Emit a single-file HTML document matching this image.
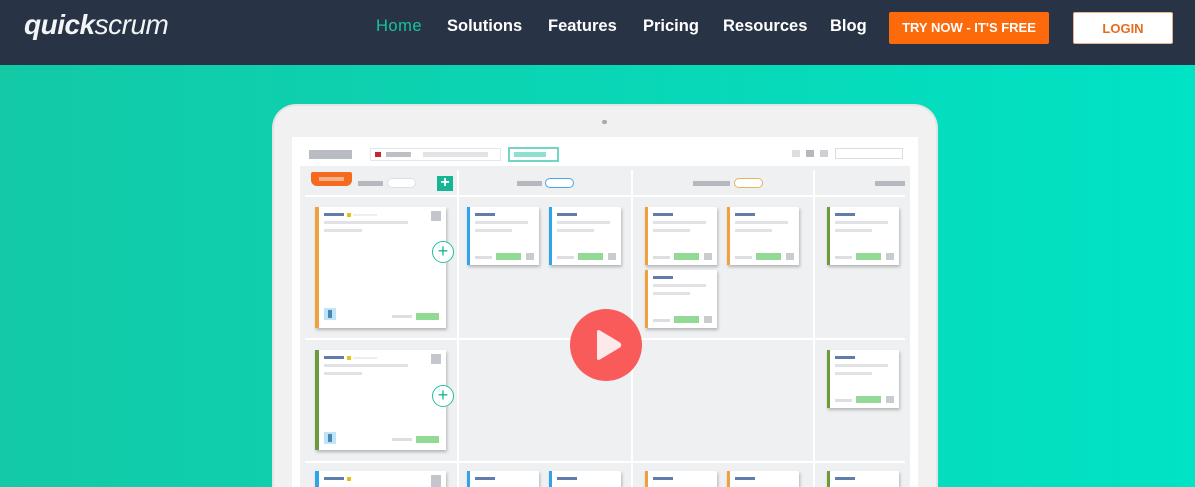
<!DOCTYPE html><html><head><style>
*{margin:0;padding:0;box-sizing:border-box}
html{width:1195px;height:487px;overflow:hidden}
body{width:1195px;height:487px;overflow:hidden;position:relative;font-family:"Liberation Sans",sans-serif;background:linear-gradient(90deg,#13c9a6,#00e3c4)}
.nav{position:absolute;left:0;top:0;width:1195px;height:65px;background:#283445}
.logo{position:absolute;left:24px;top:9px;color:#f2f4f6;font-size:28px;font-style:italic;letter-spacing:-0.5px}
.logo b{font-weight:bold}
.m{position:absolute;top:17px;color:#fff;font-weight:bold;font-size:16.5px}
.btn{position:absolute;top:12px;height:32px;font-size:13px;font-weight:bold;text-align:center;line-height:32px;border-radius:2px}
.lap{position:absolute;left:272px;top:104px;width:666px;height:383px;background:#f1f1f1;border-radius:24px 24px 0 0;border:2px solid #e2e4e6;border-bottom:none}
.scr{position:absolute;left:292px;top:137px;width:626px;height:350px;background:#fff}
.board{position:absolute;left:300px;top:166px;width:610px;height:321px;background:#eff0f2}
.r{position:absolute}
.card{position:absolute;width:72px;height:58px;background:#fff;box-shadow:1px 2px 3px rgba(0,0,0,.25)}
.card i{position:absolute;display:block}
.b{height:16px!important}
</style></head><body>
<div class="nav">
<div class="logo"><b>quick</b>scrum</div>
<div class="m" style="left:376px;color:#17c2a0;font-weight:normal;letter-spacing:.5px">Home</div>
<div class="m" style="left:447px">Solutions</div>
<div class="m" style="left:548px">Features</div>
<div class="m" style="left:643px">Pricing</div>
<div class="m" style="left:723px">Resources</div>
<div class="m" style="left:830px">Blog</div>
<div class="btn" style="left:889px;width:160px;background:#fc6a0b;color:#fff">TRY NOW - IT'S FREE</div>
<div class="btn" style="left:1073px;width:100px;background:#fff;color:#e96b1e;border:1px solid #e6b28d">LOGIN</div>
</div>
<div class="lap"></div>
<div class="r" style="left:602px;top:120px;width:5px;height:4px;background:#aaa;border-radius:2px"></div>
<div class="scr"></div>
<div class="r" style="left:309px;top:150px;width:43px;height:9px;background:#b9bcc2"></div>
<div class="r" style="left:370px;top:148px;width:131px;height:13px;border:1px solid #e4e6e9"></div>
<div class="r" style="left:375px;top:152px;width:6px;height:5px;background:#c9252f"></div>
<div class="r" style="left:386px;top:152px;width:25px;height:5px;background:#bcc0c6"></div>
<div class="r" style="left:423px;top:152px;width:65px;height:5px;background:#e1e3e6"></div>
<div class="r" style="left:508px;top:147px;width:51px;height:15px;border:2px solid #6fd6c4"></div>
<div class="r" style="left:514px;top:152px;width:32px;height:5px;background:#8ee0d2"></div>
<div class="r" style="left:792px;top:150px;width:8px;height:7px;background:#dcdee2"></div>
<div class="r" style="left:806px;top:150px;width:8px;height:7px;background:#b5b9bf"></div>
<div class="r" style="left:820px;top:150px;width:8px;height:7px;background:#ccd0d5"></div>
<div class="r" style="left:835px;top:148px;width:68px;height:11px;border:1px solid #d9dce0;background:#fff"></div>
<div class="board"></div>
<div class="r" style="left:457px;top:170px;width:2px;height:317px;background:#fff"></div>
<div class="r" style="left:631px;top:170px;width:2px;height:317px;background:#fff"></div>
<div class="r" style="left:813px;top:170px;width:2px;height:317px;background:#fff"></div>
<div class="r" style="left:305px;top:195px;width:600px;height:2px;background:#fff"></div>
<div class="r" style="left:305px;top:338px;width:600px;height:2px;background:#fff"></div>
<div class="r" style="left:305px;top:461px;width:600px;height:2px;background:#fff"></div>
<div class="r" style="left:311px;top:172px;width:41px;height:14px;background:#f46a1f;border-radius:2px 2px 6px 6px"></div>
<div class="r" style="left:319px;top:177px;width:25px;height:4px;background:#f9b08a"></div>
<div class="r" style="left:358px;top:181px;width:25px;height:5px;background:#b4b8bf"></div>
<div class="r" style="left:387px;top:178px;width:29px;height:10px;border:1px solid #dde;background:#fff;border-radius:6px"></div>
<div class="r" style="left:437px;top:176px;width:16px;height:15px;background:#17b596;color:#fff;font-weight:bold;font-size:16px;line-height:14px;text-align:center">+</div>
<div class="r" style="left:517px;top:181px;width:25px;height:5px;background:#b4b8bf"></div>
<div class="r" style="left:545px;top:178px;width:29px;height:10px;border:1px solid #4da5e0;background:#fff;border-radius:6px"></div>
<div class="r" style="left:693px;top:181px;width:37px;height:5px;background:#b4b8bf"></div>
<div class="r" style="left:734px;top:178px;width:29px;height:10px;border:1px solid #e8b35a;background:#fff;border-radius:6px"></div>
<div class="r" style="left:875px;top:181px;width:30px;height:5px;background:#b4b8bf"></div>

<div class="card" style="left:315px;top:207px;width:131px;height:121px;border-left:4px solid #f0a03c"><i style="left:5px;top:6px;width:20px;height:3px;background:#5f7cab"></i><i style="left:28px;top:6px;width:4px;height:4px;background:#e3c21a"></i><i style="left:34px;top:7px;width:24px;height:2px;background:#eceef0"></i><i style="left:5px;top:14px;width:84px;height:3px;background:#e0e2e6"></i><i style="left:5px;top:22px;width:38px;height:3px;background:#e0e2e6"></i><i style="left:112px;top:4px;width:10px;height:10px;background:#c3c6cc"></i><i style="left:5px;top:101px;width:12px;height:12px;background:#bfe3f7"></i><i style="left:9px;top:103px;width:4px;height:8px;background:#4a87b2"></i><i style="left:73px;top:108px;width:20px;height:3px;background:#dcdee2"></i><i style="left:97px;top:106px;width:23px;height:7px;background:#93d996"></i></div>
<div class="card" style="left:315px;top:350px;width:131px;height:100px;border-left:4px solid #6a9c3c"><i style="left:5px;top:6px;width:20px;height:3px;background:#5f7cab"></i><i style="left:28px;top:6px;width:4px;height:4px;background:#e3c21a"></i><i style="left:34px;top:7px;width:24px;height:2px;background:#eceef0"></i><i style="left:5px;top:14px;width:84px;height:3px;background:#e0e2e6"></i><i style="left:5px;top:22px;width:38px;height:3px;background:#e0e2e6"></i><i style="left:112px;top:4px;width:10px;height:10px;background:#c3c6cc"></i><i style="left:5px;top:82px;width:12px;height:12px;background:#bfe3f7"></i><i style="left:9px;top:84px;width:4px;height:8px;background:#4a87b2"></i><i style="left:73px;top:88px;width:20px;height:3px;background:#dcdee2"></i><i style="left:97px;top:86px;width:23px;height:7px;background:#93d996"></i></div>
<div class="card b" style="left:315px;top:471px;width:131px;border-left:4px solid #2fa4e8"><i style="left:5px;top:6px;width:20px;height:3px;background:#5f7cab"></i><i style="left:28px;top:6px;width:4px;height:4px;background:#e3c21a"></i><i style="left:112px;top:4px;width:10px;height:12px;background:#c3c6cc"></i></div>
<div class="r" style="left:432px;top:241px;width:22px;height:22px;border:1.5px solid #25c0a0;border-radius:50%;background:#fff;color:#17b596;font-size:18px;line-height:18px;text-align:center">+</div>
<div class="r" style="left:432px;top:385px;width:22px;height:22px;border:1.5px solid #25c0a0;border-radius:50%;background:#fff;color:#17b596;font-size:18px;line-height:18px;text-align:center">+</div>

<div class="card" style="left:467px;top:207px;border-left:3px solid #2fa4e8"><i style="left:5px;top:6px;width:20px;height:3px;background:#5f7cab"></i><i style="left:5px;top:14px;width:53px;height:3px;background:#e0e2e6"></i><i style="left:5px;top:22px;width:37px;height:3px;background:#e0e2e6"></i><i style="left:5px;top:49px;width:17px;height:3px;background:#dcdee2"></i><i style="left:26px;top:46px;width:25px;height:7px;background:#93d996"></i><i style="left:56px;top:46px;width:8px;height:7px;background:#c8cbd0"></i></div>
<div class="card" style="left:549px;top:207px;border-left:3px solid #2fa4e8"><i style="left:5px;top:6px;width:20px;height:3px;background:#5f7cab"></i><i style="left:5px;top:14px;width:53px;height:3px;background:#e0e2e6"></i><i style="left:5px;top:22px;width:37px;height:3px;background:#e0e2e6"></i><i style="left:5px;top:49px;width:17px;height:3px;background:#dcdee2"></i><i style="left:26px;top:46px;width:25px;height:7px;background:#93d996"></i><i style="left:56px;top:46px;width:8px;height:7px;background:#c8cbd0"></i></div>
<div class="card" style="left:645px;top:207px;border-left:3px solid #f0a03c"><i style="left:5px;top:6px;width:20px;height:3px;background:#5f7cab"></i><i style="left:5px;top:14px;width:53px;height:3px;background:#e0e2e6"></i><i style="left:5px;top:22px;width:37px;height:3px;background:#e0e2e6"></i><i style="left:5px;top:49px;width:17px;height:3px;background:#dcdee2"></i><i style="left:26px;top:46px;width:25px;height:7px;background:#93d996"></i><i style="left:56px;top:46px;width:8px;height:7px;background:#c8cbd0"></i></div>
<div class="card" style="left:727px;top:207px;border-left:3px solid #f0a03c"><i style="left:5px;top:6px;width:20px;height:3px;background:#5f7cab"></i><i style="left:5px;top:14px;width:53px;height:3px;background:#e0e2e6"></i><i style="left:5px;top:22px;width:37px;height:3px;background:#e0e2e6"></i><i style="left:5px;top:49px;width:17px;height:3px;background:#dcdee2"></i><i style="left:26px;top:46px;width:25px;height:7px;background:#93d996"></i><i style="left:56px;top:46px;width:8px;height:7px;background:#c8cbd0"></i></div>
<div class="card" style="left:645px;top:270px;border-left:3px solid #f0a03c"><i style="left:5px;top:6px;width:20px;height:3px;background:#5f7cab"></i><i style="left:5px;top:14px;width:53px;height:3px;background:#e0e2e6"></i><i style="left:5px;top:22px;width:37px;height:3px;background:#e0e2e6"></i><i style="left:5px;top:49px;width:17px;height:3px;background:#dcdee2"></i><i style="left:26px;top:46px;width:25px;height:7px;background:#93d996"></i><i style="left:56px;top:46px;width:8px;height:7px;background:#c8cbd0"></i></div>
<div class="card" style="left:827px;top:207px;border-left:3px solid #6a9c3c"><i style="left:5px;top:6px;width:20px;height:3px;background:#5f7cab"></i><i style="left:5px;top:14px;width:53px;height:3px;background:#e0e2e6"></i><i style="left:5px;top:22px;width:37px;height:3px;background:#e0e2e6"></i><i style="left:5px;top:49px;width:17px;height:3px;background:#dcdee2"></i><i style="left:26px;top:46px;width:25px;height:7px;background:#93d996"></i><i style="left:56px;top:46px;width:8px;height:7px;background:#c8cbd0"></i></div>
<div class="card" style="left:827px;top:350px;border-left:3px solid #6a9c3c"><i style="left:5px;top:6px;width:20px;height:3px;background:#5f7cab"></i><i style="left:5px;top:14px;width:53px;height:3px;background:#e0e2e6"></i><i style="left:5px;top:22px;width:37px;height:3px;background:#e0e2e6"></i><i style="left:5px;top:49px;width:17px;height:3px;background:#dcdee2"></i><i style="left:26px;top:46px;width:25px;height:7px;background:#93d996"></i><i style="left:56px;top:46px;width:8px;height:7px;background:#c8cbd0"></i></div>
<div class="card b" style="left:467px;top:471px;border-left:3px solid #2fa4e8"><i style="left:5px;top:6px;width:20px;height:3px;background:#5f7cab"></i></div>
<div class="card b" style="left:549px;top:471px;border-left:3px solid #2fa4e8"><i style="left:5px;top:6px;width:20px;height:3px;background:#5f7cab"></i></div>
<div class="card b" style="left:645px;top:471px;border-left:3px solid #f0a03c"><i style="left:5px;top:6px;width:20px;height:3px;background:#5f7cab"></i></div>
<div class="card b" style="left:727px;top:471px;border-left:3px solid #f0a03c"><i style="left:5px;top:6px;width:20px;height:3px;background:#5f7cab"></i></div>
<div class="card b" style="left:827px;top:471px;border-left:3px solid #6a9c3c"><i style="left:5px;top:6px;width:20px;height:3px;background:#5f7cab"></i></div>

<svg class="r" style="left:569px;top:309px" width="74" height="74" viewBox="0 0 74 74"><circle cx="37" cy="36" r="36" fill="#f95a5a"/><path d="M28 23 Q28 20 31 21.5 L51 33.5 Q53.5 36 51 38.5 L31 50.5 Q28 52 28 49 Z" fill="#fde9e9"/></svg>
</body></html>
